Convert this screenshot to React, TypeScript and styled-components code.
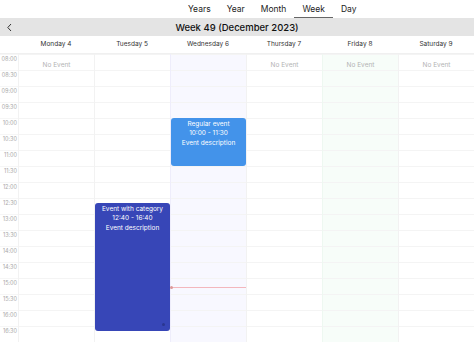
import React from "react";
import styled, { createGlobalStyle } from "styled-components";

const Global = createGlobalStyle`
  html, body { margin: 0; padding: 0; background: #ffffff; }
  body { font-family: Inter, "Open Sans", sans-serif; }
`;

const SLOT = 16;
const START_HOUR = 8;

const Root = styled.div`
  width: 474px;
  height: 343px;
  overflow: hidden;
  background: #fff;
  display: flex;
  flex-direction: column;
  color: #222;
`;

const TabBar = styled.div`
  height: 18px;
  display: flex;
  align-items: stretch;
  padding-left: 180px;
  flex-shrink: 0;
`;

const Tab = styled.div<{ $active?: boolean }>`
  padding: 0 8px;
  font-size: 8.5px;
  line-height: 18px;
  color: #222;
  box-sizing: border-box;
  border-bottom: ${(p) => (p.$active ? "1.5px solid #666" : "1.5px solid transparent")};
`;

const NavBar = styled.div`
  height: 18px;
  flex-shrink: 0;
  background: #e4e4e4;
  display: grid;
  grid-template-columns: 18px 1fr 18px;
  align-items: center;
`;

const Back = styled.div`
  display: flex;
  align-items: center;
  justify-content: center;
  color: #333;
`;

const Title = styled.div`
  text-align: center;
  font-size: 9.5px;
  font-weight: 500;
  color: #111;
`;

const Columns = "18px repeat(6, 1fr)";

const DayHeader = styled.div`
  height: 18px;
  flex-shrink: 0;
  display: grid;
  grid-template-columns: ${Columns};
  border-bottom: 1px solid #f0f0f0;
  box-sizing: border-box;
`;

const DayName = styled.div`
  font-size: 6.5px;
  line-height: 17px;
  text-align: center;
  color: #333;
`;

const Body = styled.div`
  flex: 1;
  display: grid;
  grid-template-columns: ${Columns};
  align-items: start;
`;

const Gutter = styled.div`
  display: flex;
  flex-direction: column;
`;

const TimeLabel = styled.div`
  height: ${SLOT}px;
  box-sizing: border-box;
  font-size: 5.5px;
  color: #a8a8a8;
  text-align: right;
  padding-right: 1px;
  padding-top: 1px;
  line-height: 7px;
  border-top: 1px solid #f6f6f6;
`;

const DayColumn = styled.div<{ $tint?: string; $edge?: string }>`
  position: relative;
  background: ${(p) => p.$tint || "#fff"};
  border-left: 1px solid ${(p) => p.$edge || "#f2f2f2"};
  ${(p) => (p.$edge ? `border-right: 1px solid ${p.$edge};` : "")}
  box-sizing: border-box;
  margin-right: ${(p) => (p.$edge ? "-1px" : "0")};
`;

const Slot = styled.div`
  height: ${SLOT}px;
  box-sizing: border-box;
  border-top: 1px solid #f4f4f4;
`;

const NoEvent = styled.div`
  position: absolute;
  top: 7px;
  left: 0;
  right: 0;
  text-align: center;
  font-size: 6.5px;
  color: #b3b3b3;
`;

const EventCard = styled.div<{ $color: string }>`
  position: absolute;
  left: 0;
  right: 0;
  background: ${(p) => p.$color};
  border-radius: 3px;
  color: #fff;
  text-align: center;
  font-size: 6.5px;
  line-height: 9.6px;
  font-weight: 400;
  padding-top: 1.5px;
  box-sizing: border-box;
`;

const Handle = styled.div`
  position: absolute;
  right: 5px;
  bottom: 5px;
  width: 3px;
  height: 3px;
  border-radius: 50%;
  background: #2a3690;
`;

const NowLine = styled.div`
  position: absolute;
  left: 0;
  right: 0;
  height: 1px;
  background: #f3b7bd;
  &::before {
    content: "";
    position: absolute;
    left: -1.5px;
    top: -1px;
    width: 3px;
    height: 3px;
    border-radius: 50%;
    background: #d99;
  }
`;

type Ev = { title: string; start: number; end: number; desc: string; color: string; label: string; handle?: boolean };

const days: { name: string; noEvent?: boolean; tint?: string; edge?: string; events?: Ev[]; now?: number }[] = [
  { name: "Monday 4", noEvent: true },
  {
    name: "Tuesday 5",
    events: [
      { title: "Event with category", label: "12:40 - 16:40", start: 12 + 40 / 60, end: 16 + 40 / 60, desc: "Event description", color: "#3746b7", handle: true },
    ],
  },
  {
    name: "Wednesday 6",
    tint: "#f8f8ff",
    edge: "#eeedfb",
    events: [
      { title: "Regular event", label: "10:00 - 11:30", start: 10, end: 11.5, desc: "Event description", color: "#4393ea" },
    ],
    now: 15 + 17 / 60,
  },
  { name: "Thursday 7", noEvent: true },
  { name: "Friday 8", noEvent: true, tint: "#f7fdf9", edge: "#eef8f1" },
  { name: "Saturday 9", noEvent: true },
];

const times: string[] = [];
for (let h = START_HOUR; h < 17; h++) {
  times.push(`${String(h).padStart(2, "0")}:00`);
  times.push(`${String(h).padStart(2, "0")}:30`);
}

const y = (t: number) => (t - START_HOUR) * SLOT * 2;

export default function App() {
  const tabs = ["Years", "Year", "Month", "Week", "Day"];
  return (
    <Root>
      <Global />
      <TabBar>
        {tabs.map((t) => (
          <Tab key={t} $active={t === "Week"}>
            {t}
          </Tab>
        ))}
      </TabBar>
      <NavBar>
        <Back>
          <svg width="7" height="9" viewBox="0 0 7 9">
            <path d="M5 1 L1.8 4.5 L5 8" fill="none" stroke="#333" strokeWidth="1" />
          </svg>
        </Back>
        <Title>Week 49 (December 2023)</Title>
        <div />
      </NavBar>
      <DayHeader>
        <div />
        {days.map((d) => (
          <DayName key={d.name}>{d.name}</DayName>
        ))}
      </DayHeader>
      <Body>
        <Gutter>
          {times.map((t) => (
            <TimeLabel key={t}>{t}</TimeLabel>
          ))}
        </Gutter>
        {days.map((d) => (
          <DayColumn key={d.name} $tint={d.tint} $edge={d.edge}>
            {times.map((t) => (
              <Slot key={t} />
            ))}
            {d.noEvent && <NoEvent>No Event</NoEvent>}
            {d.events?.map((e) => (
              <EventCard key={e.title} $color={e.color} style={{ top: y(e.start), height: y(e.end) - y(e.start) }}>
                <div>{e.title}</div>
                <div>{e.label}</div>
                <div>{e.desc}</div>
                {e.handle && <Handle />}
              </EventCard>
            ))}
            {d.now !== undefined && <NowLine style={{ top: y(d.now) }} />}
          </DayColumn>
        ))}
      </Body>
    </Root>
  );
}
